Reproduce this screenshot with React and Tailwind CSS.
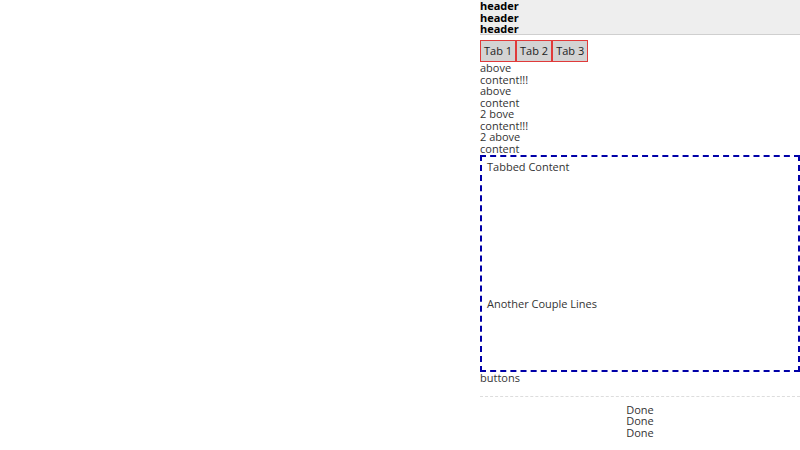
export default function App() {
  const lines = ['above', 'content!!!', 'above', 'content', '2 bove', 'content!!!', '2 above', 'content'];
  return (
    <div className="flex w-[800px] h-[450px] bg-white font-['Open_Sans',sans-serif] text-[11px] leading-[11.5px] text-[#333]">
      <div className="w-[480px]" />
      <div className="w-[320px] flex flex-col">
        {/* Header */}
        <div className="h-[35px] bg-[#eeeeee] border-b border-[#cfcfcf] font-bold text-black">
          <div>header</div>
          <div>header</div>
          <div>header</div>
        </div>

        {/* Tabs */}
        <div className="flex mt-[5px]">
          {['Tab 1', 'Tab 2', 'Tab 3'].map((t) => (
            <div key={t} className="h-[22px] px-[3px] flex items-center bg-[#d3d3d3] border border-[#e03a3a] text-[#222]">
              {t}
            </div>
          ))}
        </div>

        {/* Above content */}
        <div>
          {lines.map((l, i) => (
            <div key={i}>{l}</div>
          ))}
        </div>

        {/* Tabbed content */}
        <div className="mt-[1px] h-[217px] border-2 border-dashed border-[#0000a8] pl-[5px] pt-[4px]">
          <div>Tabbed Content</div>
          <div className="mt-[125px]">Another Couple Lines</div>
        </div>

        <div>buttons</div>

        <div className="mt-[12px] border-t border-dashed border-[#dddddd]" />

        <div className="mt-[7px] flex flex-col items-center">
          <div>Done</div>
          <div>Done</div>
          <div>Done</div>
        </div>
      </div>
    </div>
  );
}
